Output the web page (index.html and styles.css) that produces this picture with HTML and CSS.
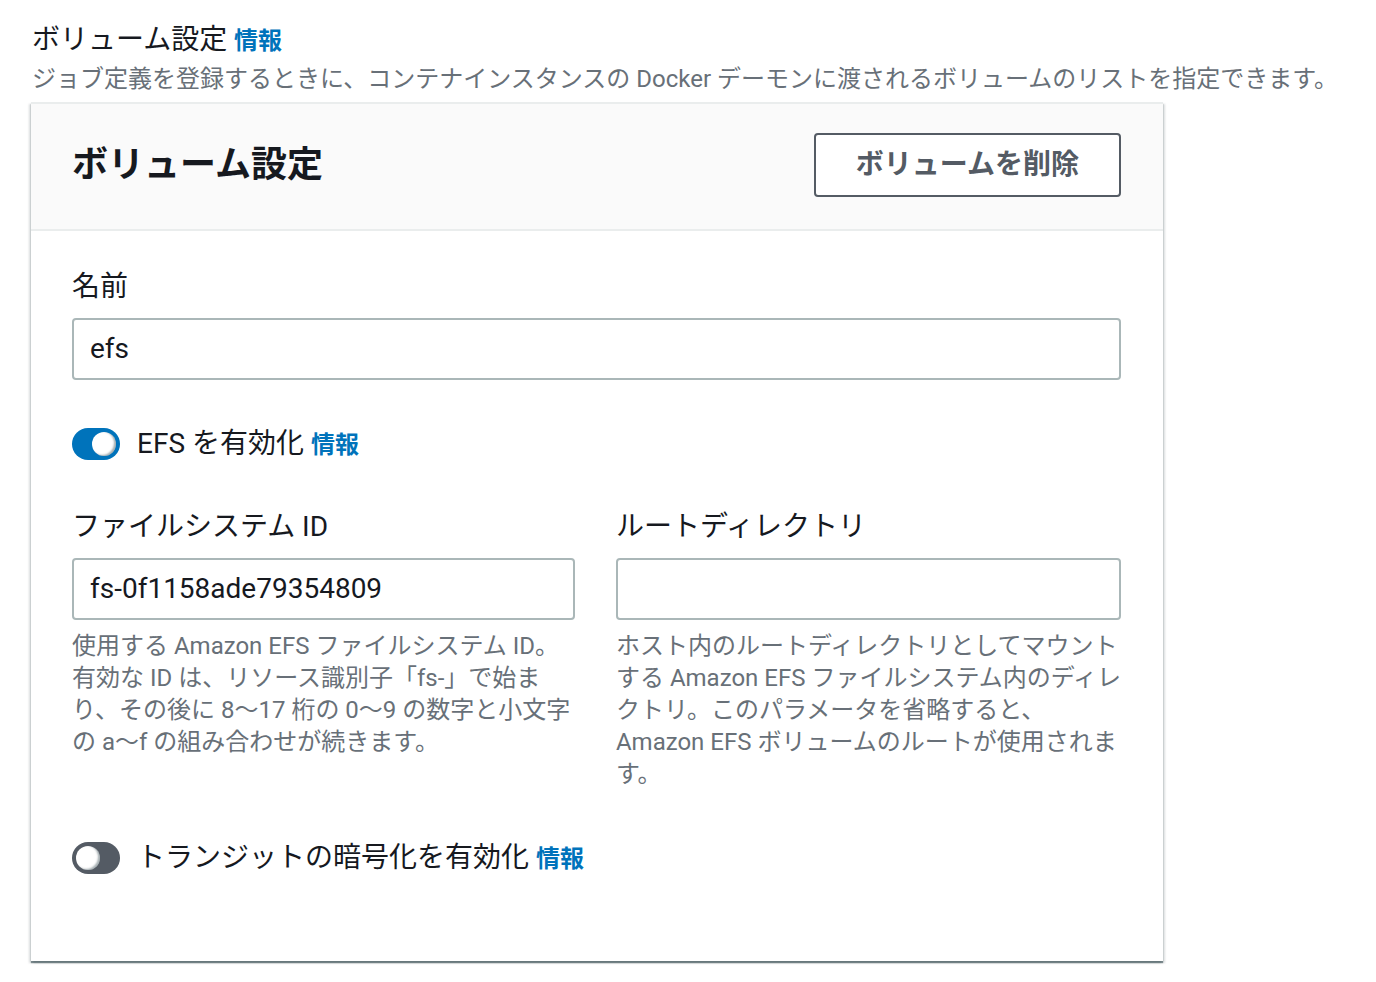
FILE: index.html
```html
<!DOCTYPE html>
<html lang="ja">
<head>
<meta charset="utf-8">
<title>ボリューム設定</title>
<link rel="stylesheet" href="styles.css">
</head>
<body>
<div class="page">
  <div class="section-title">ボリューム設定 <a class="info" href="#">情報</a></div>
  <div class="section-desc">ジョブ定義を登録するときに、コンテナインスタンスの Docker デーモンに渡されるボリュームのリストを指定できます。</div>

  <div class="card">
    <div class="card-header">
      <h2 class="card-title">ボリューム設定</h2>
      <button class="btn">ボリュームを削除</button>
    </div>
    <div class="card-body">
      <div class="field">
        <div class="label">名前</div>
        <div class="input">efs</div>
      </div>

      <div class="toggle-row first-toggle">
        <span class="toggle on"><span class="knob"></span></span>
        <span class="toggle-label">EFS を有効化 <a class="info" href="#">情報</a></span>
      </div>

      <div class="columns">
        <div class="field">
          <div class="label">ファイルシステム ID</div>
          <div class="input">fs-0f1158ade79354809</div>
          <div class="help">
            <span class="line">使用する Amazon EFS ファイルシステム ID。</span>
            <span class="line">有効な ID は、リソース識別子「fs-」で始ま</span>
            <span class="line">り、その後に 8〜17 桁の 0〜9 の数字と小文字</span>
            <span class="line">の a〜f の組み合わせが続きます。</span>
          </div>
        </div>
        <div class="field">
          <div class="label">ルートディレクトリ</div>
          <div class="input"></div>
          <div class="help">
            <span class="line">ホスト内のルートディレクトリとしてマウント</span>
            <span class="line">する Amazon EFS ファイルシステム内のディレ</span>
            <span class="line">クトリ。このパラメータを省略すると、</span>
            <span class="line">Amazon EFS ボリュームのルートが使用されま</span>
            <span class="line">す。</span>
          </div>
        </div>
      </div>

      <div class="toggle-row second-toggle">
        <span class="toggle off"><span class="knob"></span></span>
        <span class="toggle-label">トランジットの暗号化を有効化 <a class="info" href="#">情報</a></span>
      </div>
    </div>
  </div>
</div>
</body>
</html>
```

FILE: styles.css
```css
* { box-sizing: border-box; }

html, body {
  margin: 0;
  padding: 0;
  background: #ffffff;
}

body {
  font-family: "Roboto", "Noto Sans CJK JP", sans-serif;
  color: #16191f;
}

.page {
  padding: 20px 0 22px 31px;
  width: 1376px;
}

.section-title {
  font-size: 28px;
  line-height: 40px;
  padding-left: 1px;
  color: #16191f;
}

.info {
  font-size: 24px;
  font-weight: 700;
  color: #0073bb;
  text-decoration: none;
}

.section-desc {
  font-size: 24px;
  line-height: 36px;
  color: #687078;
  padding-left: 1px;
  white-space: nowrap;
}

.card {
  margin-top: 5px;
  width: 1132px;
  background: #ffffff;
  border-top: 2px solid #eaeded;
  box-shadow: 0 2px 1px 0 rgba(0, 28, 36, 0.45),
              2px 2px 2px 0 rgba(0, 28, 36, 0.15),
              -2px 2px 2px 0 rgba(0, 28, 36, 0.15);
}

.card-header {
  display: flex;
  align-items: center;
  justify-content: space-between;
  background: #fafafa;
  padding: 29px 42px 32px 41px;
  border-bottom: 2px solid #eaeded;
}

.card-title {
  margin: 0;
  font-size: 36px;
  line-height: 48px;
  font-weight: 700;
  color: #16191f;
}

.btn {
  font-family: inherit;
  height: 64px;
  padding: 0 40px;
  background: #ffffff;
  border: 2px solid #545b64;
  border-radius: 4px;
  color: #545b64;
  font-size: 28px;
  font-weight: 700;
  line-height: 40px;
}

.card-body {
  padding: 36px 42px 81px 41px;
}

.label {
  font-size: 28px;
  line-height: 40px;
  color: #16191f;
  margin-bottom: 11px;
}

.input {
  height: 62px;
  border: 2px solid #aab7b8;
  border-radius: 4px;
  padding: 0 16px;
  font-size: 28px;
  line-height: 58px;
  color: #16191f;
  background: #ffffff;
}

.toggle-row {
  display: flex;
  align-items: center;
  height: 44px;
}

.first-toggle { margin-top: 42px; }
.second-toggle { margin-top: 46px; }

.toggle {
  display: flex;
  align-items: center;
  width: 48px;
  height: 32px;
  border-radius: 16px;
  padding: 0 4px;
  flex-shrink: 0;
}

.toggle.on {
  background: #0073bb;
  justify-content: flex-end;
}

.toggle.off {
  background: #545b64;
  justify-content: flex-start;
}

.knob {
  width: 24px;
  height: 24px;
  border-radius: 50%;
  background: #ffffff;
  box-shadow: inset -2px -1px 2px rgba(0, 28, 36, 0.35);
}

.toggle-label {
  margin-left: 17px;
  font-size: 28px;
  line-height: 44px;
  color: #16191f;
}

.columns {
  margin-top: 41px;
  display: grid;
  grid-template-columns: 1fr 1fr;
  column-gap: 41px;
}

.help {
  margin-top: 10px;
  font-size: 24px;
  line-height: 32px;
  color: #687078;
}

.help .line {
  display: block;
  white-space: nowrap;
}
```
